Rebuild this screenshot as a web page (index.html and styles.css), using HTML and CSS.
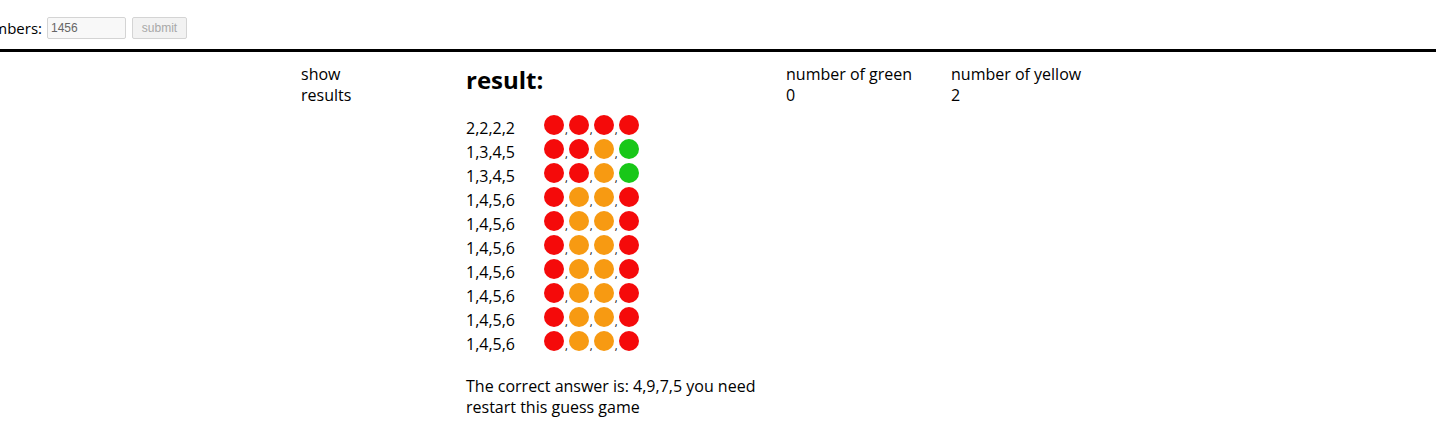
FILE: index.html
```html
<html><head>
<meta name="viewport" content="width=device-width, initial-scale=1">
<title>Guess game</title>
<meta charset="utf-8">
<link rel="stylesheet" href="styles.css">
</head><body>

<header class="guess-bar">
<label class="guess-label" for="guess">enter your numbers:</label>
<input id="guess" class="guess-input" type="text" value="1456" disabled>
<button class="guess-submit" disabled>submit</button>
</header>

<main class="board">
<div class="col col-show">show<br>results</div>

<div class="col col-result">
<h2>result:</h2>
<div class="rows">
<div class="row"><span class="nums">2,2,2,2</span><span class="dots"><i class="dot red"></i>,<i class="dot red"></i>,<i class="dot red"></i>,<i class="dot red"></i></span></div>
<div class="row"><span class="nums">1,3,4,5</span><span class="dots"><i class="dot red"></i>,<i class="dot red"></i>,<i class="dot orange"></i>,<i class="dot green"></i></span></div>
<div class="row"><span class="nums">1,3,4,5</span><span class="dots"><i class="dot red"></i>,<i class="dot red"></i>,<i class="dot orange"></i>,<i class="dot green"></i></span></div>
<div class="row"><span class="nums">1,4,5,6</span><span class="dots"><i class="dot red"></i>,<i class="dot orange"></i>,<i class="dot orange"></i>,<i class="dot red"></i></span></div>
<div class="row"><span class="nums">1,4,5,6</span><span class="dots"><i class="dot red"></i>,<i class="dot orange"></i>,<i class="dot orange"></i>,<i class="dot red"></i></span></div>
<div class="row"><span class="nums">1,4,5,6</span><span class="dots"><i class="dot red"></i>,<i class="dot orange"></i>,<i class="dot orange"></i>,<i class="dot red"></i></span></div>
<div class="row"><span class="nums">1,4,5,6</span><span class="dots"><i class="dot red"></i>,<i class="dot orange"></i>,<i class="dot orange"></i>,<i class="dot red"></i></span></div>
<div class="row"><span class="nums">1,4,5,6</span><span class="dots"><i class="dot red"></i>,<i class="dot orange"></i>,<i class="dot orange"></i>,<i class="dot red"></i></span></div>
<div class="row"><span class="nums">1,4,5,6</span><span class="dots"><i class="dot red"></i>,<i class="dot orange"></i>,<i class="dot orange"></i>,<i class="dot red"></i></span></div>
<div class="row"><span class="nums">1,4,5,6</span><span class="dots"><i class="dot red"></i>,<i class="dot orange"></i>,<i class="dot orange"></i>,<i class="dot red"></i></span></div>
</div>
<p class="answer">The correct answer is: 4,9,7,5 you need restart this guess game</p>
</div>

<div class="col col-count">number of green<br>0</div>
<div class="col col-count">number of yellow<br>2</div>
</main>

</body></html>
```

FILE: styles.css
```css
body {
	margin: 0;
	font-family: "Open Sans", "Noto Sans", sans-serif;
	font-size: 16px;
	line-height: 21px;
	color: #000;
	overflow: hidden;
}

.guess-bar {
	display: flex;
	align-items: flex-start;
	height: 32px;
	padding-top: 17px;
	border-bottom: 3px solid #000;
	box-sizing: content-box;
}

.guess-label {
	width: 200px;
	margin-left: -158px;
	text-align: right;
	white-space: nowrap;
	font-size: 15px;
	line-height: 22px;
}

.guess-input {
	width: 79px;
	height: 22px;
	box-sizing: border-box;
	margin: 0 0 0 5px;
	padding: 0 3px;
	border: 1px solid #d4d4d4;
	border-radius: 2px;
	background: #f8f8f8;
	color: #666;
	font-family: "Liberation Sans", sans-serif;
	font-size: 12px;
}

.guess-submit {
	width: 55px;
	height: 22px;
	margin: 0 0 0 6px;
	padding: 0;
	border: 1px solid #d4d4d4;
	border-radius: 2px;
	background: #f2f2f2;
	color: #a8a8a8;
	font-family: "Liberation Sans", sans-serif;
	font-size: 12px;
}

.board {
	display: grid;
	grid-template-columns: 165px 320px 165px 165px;
	padding: 12px 0 0 301px;
}

.col-result h2 {
	margin: 0 0 17px;
	font-size: 24px;
	line-height: 32px;
	font-weight: bold;
}

.row {
	display: flex;
	align-items: center;
	height: 24px;
}

.nums {
	width: 77px;
	margin-top: 6px;
}

.dots {
	display: flex;
	align-items: flex-end;
	font-size: 11px;
	line-height: 10px;
	width: 100px;
}

.dot {
	display: inline-block;
	width: 20px;
	height: 20px;
	margin: 0 1px;
	border-radius: 50%;
}

.red { background: #f50a0a; }
.orange { background: #f79a12; }
.green { background: #18c718; }

.answer {
	margin: 23px 0 0;
	width: 300px;
}
```
